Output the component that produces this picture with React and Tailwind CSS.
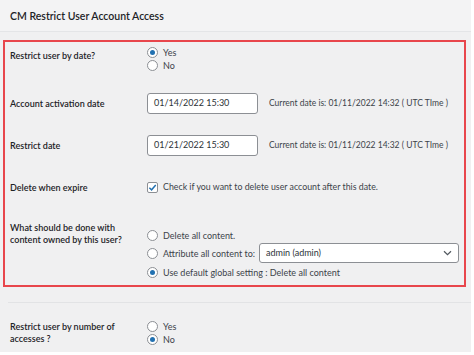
import React from "react";

const font = { fontFamily: 'Lato, "Open Sans", sans-serif' };

function Radio({ checked }) {
  return (
    <span className="inline-flex w-[11px] h-[11px] shrink-0 rounded-full border border-[#8c8f94] bg-white items-center justify-center">
      {checked && <span className="w-[5px] h-[5px] rounded-full bg-[#2271b1]" />}
    </span>
  );
}

function RadioLine({ checked, children, className = "" }) {
  return (
    <div className={"flex items-center gap-[5px] whitespace-nowrap " + className}>
      <Radio checked={checked} />
      <span className="text-[9px] leading-[13px] text-[#3c434a]">{children}</span>
    </div>
  );
}

function DateInput({ value }) {
  return (
    <div className="w-[111px] h-[21px] shrink-0 bg-white border border-[#8c8f94] rounded-[3px] flex items-center pl-[6px] text-[9px] text-[#2c3338]">
      {value}
    </div>
  );
}

const label = "w-[142px] shrink-0 pl-[5px] text-[9px] font-semibold text-[#1d2327] whitespace-nowrap";

export default function App() {
  return (
    <div className="w-[474px] h-[355px] bg-white overflow-hidden" style={font}>
      <div className="w-[471px] h-[352px] bg-[#f0f0f1] flex flex-col">
        <div className="h-[32px] shrink-0 flex items-center px-[10px] border-b border-[#e4e5e7] bg-[#f3f3f4]">
          <span className="text-[10.5px] font-semibold text-[#1d2327] mt-[2px]">
            CM Restrict User Account Access
          </span>
        </div>

        <div className="mt-[8px] ml-[3px] w-[463px] h-[247px] shrink-0 border-2 border-[#e8464c] flex flex-col">
          {/* Row 1 */}
          <div className="h-[40px] flex">
            <div className={label + " pt-[7px] leading-[13px]"}>Restrict user by date?</div>
            <div className="pt-[4px]">
              <RadioLine checked>Yes</RadioLine>
              <RadioLine>No</RadioLine>
            </div>
          </div>
          {/* Row 2 */}
          <div className="h-[42px] flex items-center">
            <div className={label + " leading-[13px]"}>Account activation date</div>
            <DateInput value="01/14/2022 15:30" />
            <span className="ml-[11px] text-[8.5px] text-[#3c434a] whitespace-nowrap">
              Current date is: 01/11/2022 14:32 ( UTC TIme )
            </span>
          </div>
          {/* Row 3 */}
          <div className="h-[42px] flex items-center">
            <div className={label + " leading-[13px]"}>Restrict date</div>
            <DateInput value="01/21/2022 15:30" />
            <span className="ml-[11px] text-[8.5px] text-[#3c434a] whitespace-nowrap">
              Current date is: 01/11/2022 14:32 ( UTC TIme )
            </span>
          </div>
          {/* Row 4 */}
          <div className="h-[42px] flex items-center">
            <div className={label + " leading-[13px]"}>Delete when expire</div>
            <span className="w-[11px] h-[11px] shrink-0 border border-[#8c8f94] bg-white rounded-[2px] flex items-center justify-center">
              <svg width="9" height="9" viewBox="0 0 10 10">
                <path d="M1.5 5.2 L4 7.6 L8.6 2.2" fill="none" stroke="#2271b1" strokeWidth="1.6" />
              </svg>
            </span>
            <span className="ml-[5px] text-[8.8px] text-[#3c434a] whitespace-nowrap">
              Check if you want to delete user account after this date.
            </span>
          </div>
          {/* Row 5 */}
          <div className="flex pt-[14px]">
            <div className={label + " leading-[12px]"}>
              What should be done with
              <br />
              content owned by this user?
            </div>
            <div className="flex flex-col flex-1 pr-[5px] pt-[7px]">
              <RadioLine className="h-[13px]">Delete all content.</RadioLine>
              <div className="flex items-center mt-[1px]">
                <RadioLine>Attribute all content to:</RadioLine>
                <div className="ml-[4px] flex-1 h-[20px] bg-white border border-[#8c8f94] rounded-[3px] flex items-center justify-between pl-[6px] pr-[6px] text-[9px] text-[#2c3338]">
                  <span>admin (admin)</span>
                  <svg width="9" height="6" viewBox="0 0 9 6">
                    <path d="M1 1.2 L4.5 4.6 L8 1.2" fill="none" stroke="#50575e" strokeWidth="1.2" />
                  </svg>
                </div>
              </div>
              <RadioLine checked className="mt-[3px]">
                Use default global setting : Delete all content
              </RadioLine>
            </div>
          </div>
        </div>

        <div className="mt-[15px] ml-[8px] h-[1px] shrink-0 bg-[#e2e3e5]" />

        <div className="flex mt-[18px]">
          <div className="w-[147px] shrink-0 pl-[10px] text-[9px] leading-[12px] font-semibold text-[#1d2327] whitespace-nowrap">
            Restrict user by number of
            <br />
            accesses ?
          </div>
          <div className="mt-[-1px]">
            <RadioLine>Yes</RadioLine>
            <RadioLine checked>No</RadioLine>
          </div>
        </div>
      </div>
    </div>
  );
}
